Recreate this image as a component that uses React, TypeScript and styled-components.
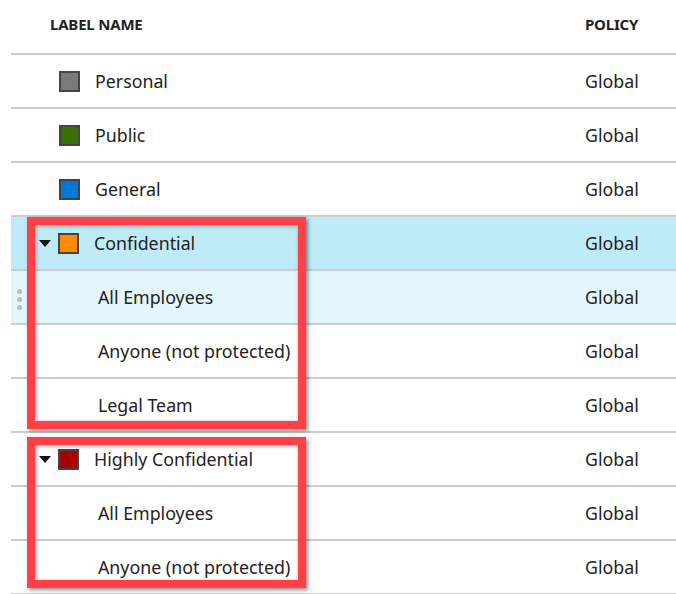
import styled, { createGlobalStyle } from "styled-components";

const GlobalStyle = createGlobalStyle`
    body {
        margin: 0;
        background: #ffffff;
        font-family: "Noto Sans", "Open Sans", sans-serif;
        color: #222222;
    }
`;

const Page = styled.div`
    position: relative;
    width: 676px;
    height: 594px;
    overflow: hidden;
    padding-left: 11px;
    box-sizing: border-box;
`;

const HeaderRow = styled.div`
    display: grid;
    grid-template-columns: 1fr 91px;
    align-items: center;
    height: 55px;
    padding-bottom: 6px;
    box-sizing: border-box;
    border-bottom: 2px solid #cccccc;
`;

const HeaderCell = styled.div<{ $indent?: number }>`
    padding-left: ${(p) => p.$indent ?? 0}px;
    font-size: 15px;
    font-weight: 700;
    color: #222222;
    letter-spacing: -0.2px;
`;

const Row = styled.div<{ $tone?: "selected" | "hover" }>`
    position: relative;
    display: grid;
    grid-template-columns: 1fr 91px;
    align-items: center;
    height: 54px;
    box-sizing: border-box;
    border-bottom: 2px solid #cccccc;
    background: ${(p) =>
        p.$tone === "selected" ? "#bfebf8" : p.$tone === "hover" ? "#e3f6fc" : "#ffffff"};
`;

const NameCell = styled.div<{ $indent: number }>`
    display: flex;
    align-items: center;
    padding-left: ${(p) => p.$indent}px;
    font-size: 17.8px;
`;

const Caret = styled.span`
    width: 0;
    height: 0;
    margin-right: 7px;
    border-left: 6.5px solid transparent;
    border-right: 6.5px solid transparent;
    border-top: 7px solid #111111;
`;

const Swatch = styled.span<{ $color: string }>`
    width: 17px;
    height: 17px;
    border: 2px solid #444444;
    background: ${(p) => p.$color};
    margin-right: 15px;
    flex-shrink: 0;
`;

const PolicyCell = styled.div`
    font-size: 17.8px;
`;

const Grip = styled.div`
    position: absolute;
    left: 6px;
    top: 18px;
    display: flex;
    flex-direction: column;
    gap: 3px;

    span {
        width: 5px;
        height: 5px;
        border-radius: 50%;
        background: #bcbcbc;
    }
`;

const Highlight = styled.div<{ $top: number; $height: number }>`
    position: absolute;
    left: 27px;
    top: ${(p) => p.$top}px;
    width: 279px;
    height: ${(p) => p.$height}px;
    box-sizing: border-box;
    border: 8px solid #ff4147;
    box-shadow: 2px 2px 4px rgba(0, 0, 0, 0.45), inset 1px 1px 4px rgba(0, 0, 0, 0.35);
    pointer-events: none;
`;

type Item = {
    name: string;
    color?: string;
    parent?: boolean;
    child?: boolean;
    tone?: "selected" | "hover";
};

const items: Item[] = [
    { name: "Personal", color: "#7a7a7a" },
    { name: "Public", color: "#3a7000" },
    { name: "General", color: "#0078d7" },
    { name: "Confidential", color: "#ff8c00", parent: true, tone: "selected" },
    { name: "All Employees", child: true, tone: "hover" },
    { name: "Anyone (not protected)", child: true },
    { name: "Legal Team", child: true },
    { name: "Highly Confidential", color: "#a80000", parent: true },
    { name: "All Employees", child: true },
    { name: "Anyone (not protected)", child: true },
];

export default function App() {
    return (
        <>
            <GlobalStyle />
            <Page>
                <HeaderRow>
                    <HeaderCell $indent={39}>LABEL NAME</HeaderCell>
                    <HeaderCell>POLICY</HeaderCell>
                </HeaderRow>
                {items.map((it, i) => (
                    <Row key={i} $tone={it.tone}>
                        {it.tone === "hover" && (
                            <Grip>
                                <span />
                                <span />
                                <span />
                            </Grip>
                        )}
                        <NameCell $indent={it.child ? 87 : it.parent ? 28 : 48}>
                            {it.parent && <Caret />}
                            {it.color && <Swatch $color={it.color} />}
                            {it.name}
                        </NameCell>
                        <PolicyCell>Global</PolicyCell>
                    </Row>
                ))}
                <Highlight $top={217} $height={212} />
                <Highlight $top={437} $height={151} />
            </Page>
        </>
    );
}
